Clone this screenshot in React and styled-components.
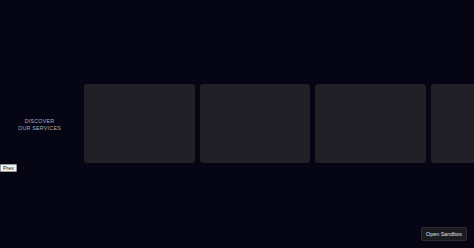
import styled, { createGlobalStyle } from 'styled-components';

const SERVICES = [1, 2, 3, 4];

const GlobalStyle = createGlobalStyle`
    html, body {
        margin: 0;
        padding: 0;
        background: #060514;
        overflow: hidden;
    }
    * {
        box-sizing: border-box;
    }
`;

const App = () => {
    return (
        <>
            <GlobalStyle />
            <Page>
                <Slider>
                    <Intro>
                        <span>Discover</span>
                        <span>Our services</span>
                    </Intro>
                    <Track>
                        {SERVICES.map((id) => (
                            <Card key={id} />
                        ))}
                    </Track>
                </Slider>
                <Controls>
                    <PrevButton>Prev</PrevButton>
                </Controls>
            </Page>
            <SandboxButton>Open Sandbox</SandboxButton>
        </>
    );
};

const Page = styled.div`
    height: 248px;
    padding-top: 84px;
    font-family: 'Liberation Sans', Arial, sans-serif;
`;

const Slider = styled.div`
    display: flex;
    align-items: center;
    height: 79px;
    overflow: hidden;
`;

const Intro = styled.div`
    width: 79px;
    flex-shrink: 0;
    display: flex;
    flex-direction: column;
    align-items: center;
    color: #aeadb9;
    font-size: 5.3px;
    line-height: 6.5px;
    letter-spacing: 0.25px;
    text-transform: uppercase;
    margin-top: 2px;
    -webkit-font-smoothing: antialiased;
`;

const Track = styled.div`
    display: flex;
    gap: 5px;
    height: 100%;
    margin-left: 5px;
`;

const Card = styled.div`
    width: 110.5px;
    height: 79px;
    flex-shrink: 0;
    background: #222027;
    border-radius: 3px;
`;

const Controls = styled.div`
    display: flex;
    padding-top: 1px;
`;

const PrevButton = styled.button`
    height: 8px;
    width: 17px;
    padding: 0;
    background: #f4f4f4;
    border: 1px solid #9a9a9a;
    border-radius: 1px;
    color: #111;
    font-family: 'Liberation Sans', Arial, sans-serif;
    font-size: 5.3px;
    line-height: 6px;
`;

const SandboxButton = styled.button`
    position: fixed;
    right: 7px;
    bottom: 7px;
    width: 46px;
    height: 14px;
    padding: 0;
    background: #1b1b1f;
    border: 1px solid #2c2c31;
    border-radius: 2px;
    color: #e2e2e6;
    font-family: 'Liberation Sans', Arial, sans-serif;
    font-size: 5.4px;
`;

export default App;
